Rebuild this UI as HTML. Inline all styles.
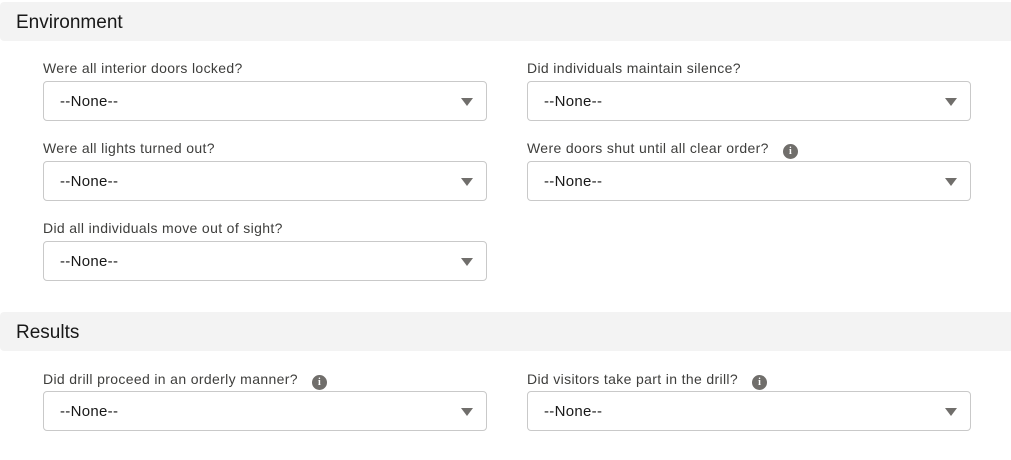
<!DOCTYPE html>
<html><head><style>
body{margin:0;width:1011px;height:460px;background:#fff;font-family:"Liberation Sans",sans-serif;position:relative;overflow:hidden}
.h{position:absolute;left:0;width:1011px;height:39px;background:#f3f3f3;border-radius:4px 0 0 4px;font-size:19px;color:#181818;line-height:42px;padding-left:16px;box-sizing:border-box}
.l{position:absolute;font-size:14px;letter-spacing:0.35px;color:#3e3e3c;line-height:16px}
.s{position:absolute;width:444px;height:40px;border:1px solid #c9c9c9;border-radius:4px;box-sizing:border-box;font-size:15px;letter-spacing:0.3px;color:#181818;line-height:40px;padding-left:16px}
.s:after{content:"";position:absolute;right:13px;top:16px;border-left:6px solid transparent;border-right:6px solid transparent;border-top:8px solid #706e6b}
.i{display:inline-block;width:15px;height:15px;border-radius:50%;background:#706e6b;color:#fff;font-size:10px;font-weight:bold;text-align:center;line-height:15px;margin-left:14px;vertical-align:-1px;font-family:"Liberation Serif",serif;letter-spacing:0}
</style></head><body>
<div class="h" style="top:2px">Environment</div>
<div class="l" style="left:43px;top:60px">Were all interior doors locked?</div>
<div class="s" style="left:43px;top:81px">--None--</div>
<div class="l" style="left:527px;top:60px">Did individuals maintain silence?</div>
<div class="s" style="left:527px;top:81px">--None--</div>
<div class="l" style="left:43px;top:140px">Were all lights turned out?</div>
<div class="s" style="left:43px;top:161px">--None--</div>
<div class="l" style="left:527px;top:140px">Were doors shut until all clear order?<span class="i">i</span></div>
<div class="s" style="left:527px;top:161px">--None--</div>
<div class="l" style="left:43px;top:220px">Did all individuals move out of sight?</div>
<div class="s" style="left:43px;top:241px">--None--</div>
<div class="h" style="top:312px">Results</div>
<div class="l" style="left:43px;top:371px">Did drill proceed in an orderly manner?<span class="i">i</span></div>
<div class="s" style="left:43px;top:391px">--None--</div>
<div class="l" style="left:527px;top:371px">Did visitors take part in the drill?<span class="i">i</span></div>
<div class="s" style="left:527px;top:391px">--None--</div>
</body></html>
